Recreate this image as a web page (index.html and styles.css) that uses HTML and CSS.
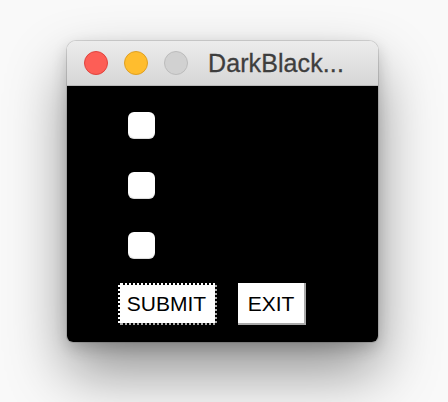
FILE: index.html
```html
<!DOCTYPE html>
<html>
<head>
<meta charset="utf-8">
<link rel="stylesheet" href="styles.css">
</head>
<body>
<div class="window">
  <div class="titlebar">
    <span class="light red"></span>
    <span class="light yellow"></span>
    <span class="light gray"></span>
    <span class="title">DarkBlack...</span>
  </div>
  <div class="content">
    <div class="checks">
      <span class="check"></span>
      <span class="check"></span>
      <span class="check"></span>
    </div>
    <div class="buttons">
      <button class="btn focused">SUBMIT</button>
      <button class="btn exit">EXIT</button>
    </div>
  </div>
</div>
</body>
</html>
```
FILE: styles.css
```css
html, body {
  margin: 0;
  padding: 0;
}
body {
  width: 448px;
  height: 402px;
  background: #f9f9f9;
  padding: 41px 0 0 67px;
  box-sizing: border-box;
  overflow: hidden;
  font-family: "Liberation Sans", Arial, sans-serif;
}
.window {
  width: 311px;
  border-radius: 9px 9px 6px 6px;
  box-shadow: 0 0 0 1px rgba(0,0,0,0.12), 0 30px 60px rgba(0,0,0,0.42), 0 6px 16px rgba(0,0,0,0.18);
  overflow: hidden;
}
.titlebar {
  height: 45px;
  box-sizing: border-box;
  background: linear-gradient(#ececec, #d6d6d6);
  border-bottom: 1px solid #b9b9b9;
  display: flex;
  align-items: center;
  padding-left: 17px;
  gap: 16px;
}
.light {
  width: 24px;
  height: 24px;
  border-radius: 50%;
  box-sizing: border-box;
  flex: none;
}
.red { background: #fd5e56; border: 1px solid #e0443e; }
.yellow { background: #ffbd2e; border: 1px solid #dfa023; }
.gray { background: #d1d1d1; border: 1px solid #bcbcbc; }
.title {
  margin-left: 4px;
  font-size: 25px;
  color: #3e3e3e;
  letter-spacing: 0.1px;
  -webkit-text-stroke: 0.3px #3e3e3e;
}
.content {
  height: 256px;
  background: #000;
  box-sizing: border-box;
  padding: 26px 0 0 51px;
}
.checks {
  display: flex;
  flex-direction: column;
  gap: 33px;
  padding-left: 10px;
}
.check {
  display: block;
  width: 27px;
  height: 27px;
  background: #fff;
  border-radius: 6px;
  box-shadow: inset 0 -1px 1px rgba(0,0,0,0.15);
}
.buttons {
  display: flex;
  gap: 21px;
  margin-top: 24px;
}
.btn {
  height: 42px;
  box-sizing: border-box;
  background: #fff;
  border: none;
  border-right: 2px solid #a9a9a9;
  border-bottom: 2px solid #a9a9a9;
  font-family: "Liberation Sans", Arial, sans-serif;
  font-size: 21px;
  color: #000;
  padding: 2px 0 0 0;
  margin: 0;
}
.focused {
  width: 99px;
  outline: 2px dotted #000;
  outline-offset: -2px;
}
.exit {
  width: 68px;
}
```
